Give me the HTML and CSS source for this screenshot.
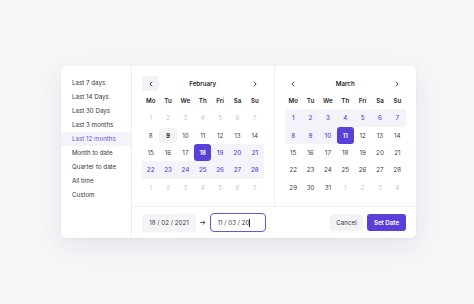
FILE: index.html
```html
<!DOCTYPE html>
<html lang="en">
<head>
    <meta charset="UTF-8">
    <meta name="viewport" content="width=device-width, initial-scale=1.0">
    <title>Date Range Picker</title>
    <link rel="stylesheet" href="styles.css">
</head>
<body>
<div class="picker">
    <aside class="presets">
        <a class="preset">Last 7 days</a>
        <a class="preset">Last 14 Days</a>
        <a class="preset">Last 30 Days</a>
        <a class="preset">Last 3 months</a>
        <a class="preset active">Last 12 months</a>
        <a class="preset">Month to date</a>
        <a class="preset">Quarter to date</a>
        <a class="preset">All time</a>
        <a class="preset">Custom</a>
    </aside>

    <div class="main">
        <div class="months">
            <section class="month">
                <div class="month-head">
                    <button class="nav boxed"><svg viewBox="0 0 6 6"><path d="M3.8 1 L1.9 3 L3.8 5"/></svg></button>
                    <span class="month-name">February</span>
                    <button class="nav"><svg viewBox="0 0 6 6"><path d="M2.2 1 L4.1 3 L2.2 5"/></svg></button>
                </div>
                <div class="grid" id="feb"></div>
            </section>
            <section class="month">
                <div class="month-head">
                    <button class="nav"><svg viewBox="0 0 6 6"><path d="M3.8 1 L1.9 3 L3.8 5"/></svg></button>
                    <span class="month-name">March</span>
                    <button class="nav"><svg viewBox="0 0 6 6"><path d="M2.2 1 L4.1 3 L2.2 5"/></svg></button>
                </div>
                <div class="grid" id="mar"></div>
            </section>
        </div>

        <div class="footer">
            <div class="date-input">18 / 02 / 2021</div>
            <span class="arrow"><svg viewBox="0 0 8 6"><path d="M0.5 3 H6.5 M4.2 0.8 L6.6 3 L4.2 5.2"/></svg></span>
            <div class="date-input focused">11 / 03 / 20<span class="caret"></span></div>
            <div class="spacer"></div>
            <button class="btn cancel">Cancel</button>
            <button class="btn primary">Set Date</button>
        </div>
    </div>
</div>

<script>
    const weekdays = ['Mo', 'Tu', 'We', 'Th', 'Fri', 'Sa', 'Su'];

    // days: [label, kind]
    function buildMonth(id, days) {
        const grid = document.getElementById(id);
        weekdays.forEach(w => {
            const el = document.createElement('span');
            el.className = 'weekday';
            el.textContent = w;
            grid.appendChild(el);
        });
        days.forEach(d => {
            const el = document.createElement('span');
            el.className = 'day ' + d[1];
            el.textContent = d[0];
            grid.appendChild(el);
        });
    }

    let feb = [];
    for (let i = 1; i <= 7; i++) feb.push([i, 'muted']);
    for (let i = 8; i <= 28; i++) {
        let kind = '';
        if (i == 9) kind = 'today';
        if (i == 18) kind = 'selected';
        if (i > 18) kind = 'range';
        feb.push([i, kind]);
    }
    for (let i = 1; i <= 7; i++) feb.push([i, 'muted']);
    buildMonth('feb', feb);

    let mar = [];
    for (let i = 1; i <= 31; i++) {
        let kind = '';
        if (i < 11) kind = 'range';
        if (i == 11) kind = 'selected end';
        mar.push([i, kind]);
    }
    for (let i = 1; i <= 4; i++) mar.push([i, 'muted']);
    buildMonth('mar', mar);
</script>
</body>
</html>
```

FILE: styles.css
```css
body {
    margin: 0;
    height: 304px;
    display: flex;
    align-items: center;
    padding-left: 61px;
    box-sizing: border-box;
    background: #f6f6f9;
    font-family: Inter, "Noto Sans", sans-serif;
    font-size: 6.2px;
    color: #2e2e36;
}

.picker {
    width: 355px;
    height: 172px;
    display: flex;
    background: #ffffff;
    border-radius: 5px;
    box-shadow: 0 8px 24px rgba(40, 40, 80, 0.08), 0 1px 3px rgba(40, 40, 80, 0.05);
    overflow: hidden;
}

/* presets */
.presets {
    width: 70px;
    padding-top: 10px;
    border-right: 1px solid #efeff3;
    display: flex;
    flex-direction: column;
}

.preset {
    height: 14px;
    line-height: 14px;
    padding-left: 11px;
    color: #34343c;
}

.preset.active {
    background: #f4f3f9;
    color: #6a54d8;
}

/* calendars */
.main {
    flex: 1;
    display: flex;
    flex-direction: column;
}

.months {
    display: flex;
    height: 140px;
}

.month {
    flex: 1;
    padding: 10px 10px 0 10px;
}

.month + .month {
    border-left: 1px solid #efeff3;
}

.month-head {
    height: 15px;
    display: flex;
    align-items: center;
    justify-content: space-between;
}

.month-name {
    font-weight: 600;
    color: #25252c;
}

.nav {
    width: 17px;
    height: 15px;
    padding: 0;
    border: none;
    background: none;
    border-radius: 3px;
    display: flex;
    align-items: center;
    justify-content: center;
    cursor: pointer;
}

.nav.boxed {
    background: #f3f3f6;
}

.nav svg {
    width: 6px;
    height: 6px;
    fill: none;
    stroke: #2a2a30;
    stroke-width: 0.9;
    stroke-linecap: round;
    stroke-linejoin: round;
}

.grid {
    display: grid;
    grid-template-columns: repeat(7, 1fr);
    grid-auto-rows: 17.33px;
    margin-top: 1px;
}

.weekday,
.day {
    display: flex;
    align-items: center;
    justify-content: center;
}

.weekday {
    font-weight: 600;
    color: #25252c;
}

.day {
    color: #3a3a42;
}

.day.muted {
    color: #c6c6cc;
}

.day.today {
    font-weight: 700;
    color: #1e1e24;
    background: #f3f3f6;
    border-radius: 3px;
    margin: 1px 0;
}

.day.range {
    background: #f4f3f9;
    color: #5c45d6;
    font-weight: 500;
}

.day.selected {
    background: #5b3fd9;
    color: #ffffff;
    font-weight: 600;
    border-radius: 3px;
}

/* footer */
.footer {
    flex: 1;
    border-top: 1px solid #efeff3;
    display: flex;
    align-items: center;
    padding: 0 10px;
}

.date-input {
    height: 18px;
    width: 54px;
    box-sizing: border-box;
    background: #f4f4f7;
    border-radius: 3px;
    display: flex;
    align-items: center;
    justify-content: center;
    color: #3a3a42;
}

.date-input.focused {
    width: 56px;
    height: 19px;
    background: #ffffff;
    border: 1px solid #6a54d8;
    border-radius: 4px;
    justify-content: flex-start;
    padding-left: 7px;
}

.caret {
    width: 0.6px;
    height: 8px;
    background: #2a2a30;
}

.arrow {
    width: 13.6px;
    display: flex;
    justify-content: center;
}

.arrow svg {
    width: 6px;
    height: 5px;
    fill: none;
    stroke: #2a2a30;
    stroke-width: 1;
    stroke-linecap: round;
    stroke-linejoin: round;
}

.spacer {
    flex: 1;
}

.btn {
    height: 17px;
    border: none;
    border-radius: 3px;
    padding: 0;
    font-family: inherit;
    font-size: 6.2px;
    cursor: pointer;
}

.btn.cancel {
    width: 33px;
    background: #f3f3f6;
    color: #34343c;
}

.btn.primary {
    width: 39px;
    margin-left: 4px;
    background: #5b3fd9;
    color: #ffffff;
    font-weight: 600;
}
```
